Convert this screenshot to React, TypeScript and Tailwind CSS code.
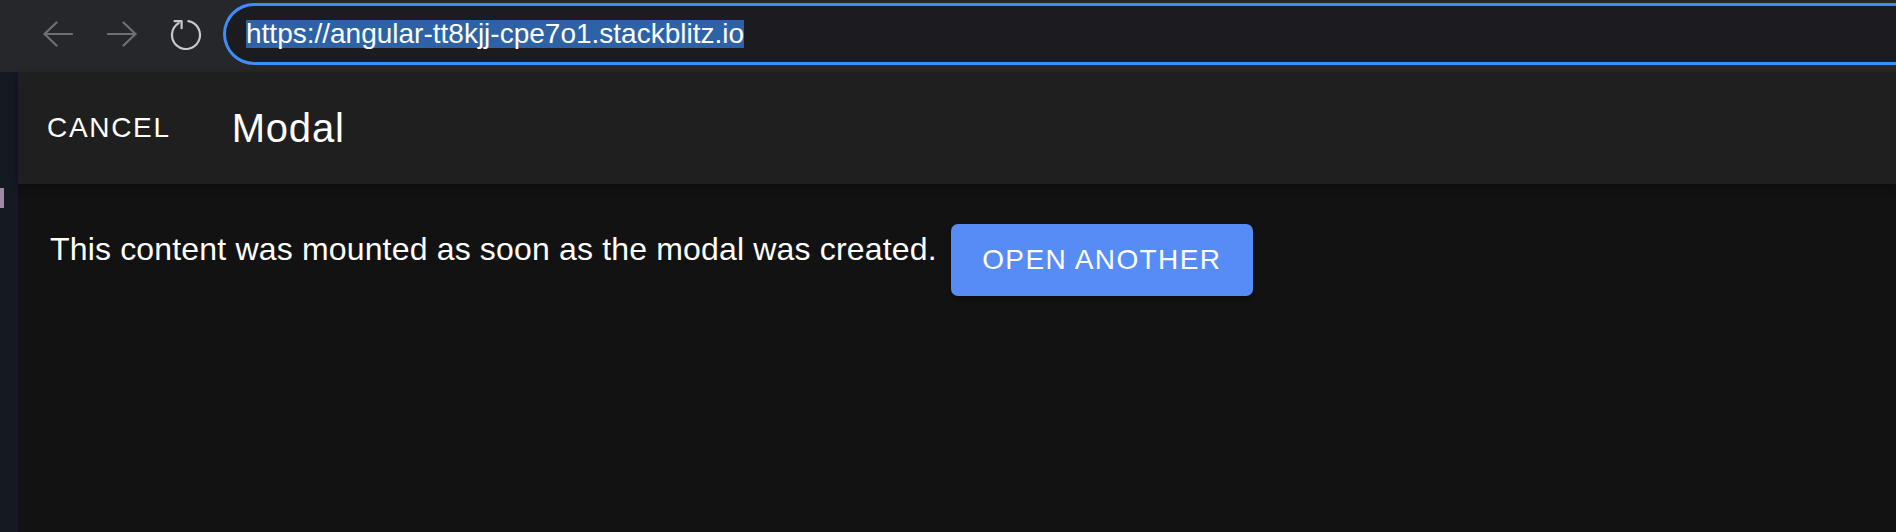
import React from 'react'

function ArrowIcon({ flip = false }: { flip?: boolean }) {
  return (
    <svg
      width="30"
      height="26"
      viewBox="0 0 30 26"
      fill="none"
      stroke="#6f7074"
      strokeWidth="2.2"
      strokeLinecap="round"
      strokeLinejoin="round"
      className={flip ? '-scale-x-100' : ''}
    >
      <path d="M1.5 13H29" />
      <path d="M13.5 1.5L1.5 13l12 11.5" />
    </svg>
  )
}

function ReloadIcon() {
  return (
    <svg
      width="32"
      height="32"
      viewBox="0 0 32 32"
      fill="none"
      stroke="#c9c9cb"
      strokeWidth="2.2"
      strokeLinecap="round"
      strokeLinejoin="round"
    >
      {/* open circle, gap near the top-left */}
      <path d="M18.4 3.2A14 14 0 1 1 8.6 5.1" />
      <path d="M4.6 3.2H11.6V10.2" />
    </svg>
  )
}

export default function App() {
  return (
    <div className="h-[532px] w-full flex flex-col overflow-hidden bg-[#121212] font-['Liberation_Sans',Arial,sans-serif]">
      {/* browser bar */}
      <div className="h-[72px] shrink-0 flex items-center pb-[4px] bg-[#26272b]">
        <div className="ml-[43px] flex items-center">
          <ArrowIcon />
        </div>
        <div className="ml-[34px] flex items-center">
          <ArrowIcon flip />
        </div>
        <div className="ml-[33px] flex items-center">
          <ReloadIcon />
        </div>
        <div className="ml-[21px] flex-1 h-[62px] flex items-center rounded-l-[31px] border-[3px] border-r-0 border-[#3e8ef7] bg-[#1c1b20] pl-[20px]">
          <span className="text-[28px] leading-[28px] text-white bg-[#2d62a6]">
            https://angular-tt8kjj-cpe7o1.stackblitz.io
          </span>
        </div>
      </div>

      <div className="flex-1 flex">
        {/* editor gutter */}
        <div className="w-[18px] shrink-0 flex flex-col bg-[#151922]">
          <div className="mt-[116px] w-[4px] h-[20px] bg-[#9d8aa7]" />
        </div>

        {/* modal */}
        <div className="flex-1 flex flex-col">
          <div className="relative z-10 h-[112px] shrink-0 flex items-center bg-[#1f1f1f] pl-[29px] shadow-[0_3px_8px_rgba(0,0,0,0.35)]">
            <button className="text-[28px] uppercase tracking-[1.68px] text-white">
              Cancel
            </button>
            <h1 className="ml-[61px] text-[40px] tracking-[0.8px] text-white">Modal</h1>
          </div>

          <div className="flex-1 flex items-start pt-[32px] pl-[32px]">
            <p className="mt-[15px] text-[32px] leading-[36px] tracking-[0.17px] text-white">
              This content was mounted as soon as the modal was created.
            </p>
            <button className="ml-[14px] mt-[8px] w-[302px] h-[72px] flex items-center justify-center rounded-[7px] bg-[#578cf6] text-[28px] uppercase tracking-[1.4px] text-white shadow-[0_3px_4px_rgba(0,0,0,0.3)]">
              Open another
            </button>
          </div>
        </div>
      </div>
    </div>
  )
}
